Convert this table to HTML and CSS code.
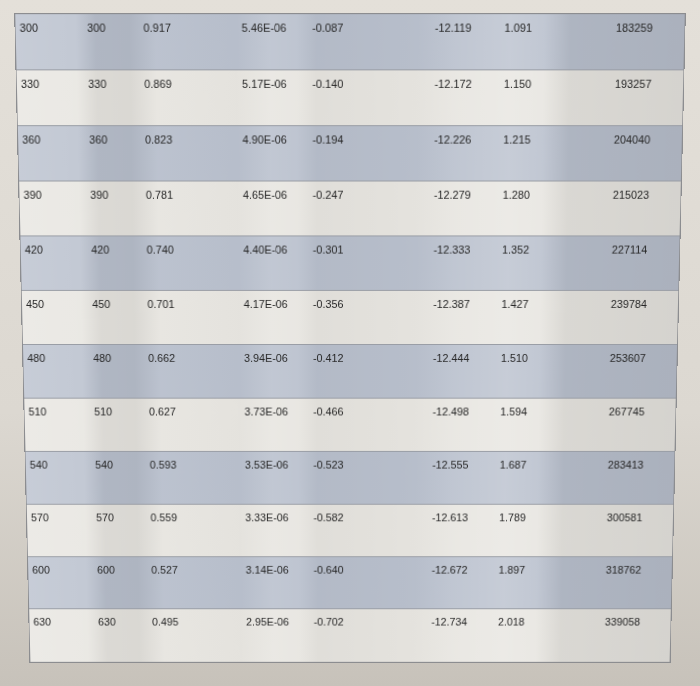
FILE: index.html
```html
<!DOCTYPE html>
<html>
<head>
<meta charset="utf-8">
<link rel="stylesheet" href="styles.css">
</head>
<body>
<div class="photo">
  <div class="sheet">
    <div class="row dark"><span>300</span><span>300</span><span>0.917</span><span>5.46E-06</span><span>-0.087</span><span>-12.119</span><span>1.091</span><span>183259</span></div>
    <div class="row light"><span>330</span><span>330</span><span>0.869</span><span>5.17E-06</span><span>-0.140</span><span>-12.172</span><span>1.150</span><span>193257</span></div>
    <div class="row dark"><span>360</span><span>360</span><span>0.823</span><span>4.90E-06</span><span>-0.194</span><span>-12.226</span><span>1.215</span><span>204040</span></div>
    <div class="row light"><span>390</span><span>390</span><span>0.781</span><span>4.65E-06</span><span>-0.247</span><span>-12.279</span><span>1.280</span><span>215023</span></div>
    <div class="row dark"><span>420</span><span>420</span><span>0.740</span><span>4.40E-06</span><span>-0.301</span><span>-12.333</span><span>1.352</span><span>227114</span></div>
    <div class="row light"><span>450</span><span>450</span><span>0.701</span><span>4.17E-06</span><span>-0.356</span><span>-12.387</span><span>1.427</span><span>239784</span></div>
    <div class="row dark"><span>480</span><span>480</span><span>0.662</span><span>3.94E-06</span><span>-0.412</span><span>-12.444</span><span>1.510</span><span>253607</span></div>
    <div class="row light"><span>510</span><span>510</span><span>0.627</span><span>3.73E-06</span><span>-0.466</span><span>-12.498</span><span>1.594</span><span>267745</span></div>
    <div class="row dark"><span>540</span><span>540</span><span>0.593</span><span>3.53E-06</span><span>-0.523</span><span>-12.555</span><span>1.687</span><span>283413</span></div>
    <div class="row light"><span>570</span><span>570</span><span>0.559</span><span>3.33E-06</span><span>-0.582</span><span>-12.613</span><span>1.789</span><span>300581</span></div>
    <div class="row dark"><span>600</span><span>600</span><span>0.527</span><span>3.14E-06</span><span>-0.640</span><span>-12.672</span><span>1.897</span><span>318762</span></div>
    <div class="row light"><span>630</span><span>630</span><span>0.495</span><span>2.95E-06</span><span>-0.702</span><span>-12.734</span><span>2.018</span><span>339058</span></div>
  </div>
</div>
</body>
</html>
```
FILE: styles.css
```css
html, body {
  margin: 0;
  padding: 0;
}
body {
  width: 700px;
  height: 686px;
  overflow: hidden;
  background: linear-gradient(to bottom, #e4e0d9 0%, #dcd8d1 60%, #c7c2ba 100%);
  font-family: "Liberation Sans", Arial, sans-serif;
}
.photo {
  padding: 20px 22px 0 22px;
}
.sheet {
  --light: linear-gradient(to right,
    rgba(255,255,255,0.20) 0%,
    rgba(255,255,255,0.14) 9%,
    rgba(0,0,0,0.05) 12%,
    rgba(0,0,0,0.06) 17%,
    rgba(255,255,255,0.04) 21%,
    rgba(0,0,0,0.01) 33%,
    rgba(255,255,255,0.12) 38%,
    rgba(255,255,255,0.08) 42%,
    rgba(0,0,0,0.03) 45%,
    rgba(0,0,0,0.01) 60%,
    rgba(255,255,255,0.10) 66%,
    rgba(255,255,255,0.20) 74%,
    rgba(255,255,255,0.12) 79%,
    rgba(0,0,0,0.06) 83%,
    rgba(0,0,0,0.08) 100%);
  width: 656px;
  border: 1px solid #8c8d90;
  box-sizing: border-box;
  display: flex;
  flex-direction: column;
  transform-origin: 50% 50%;
  transform: perspective(1000px) rotateX(-4.1deg);
}
.row {
  height: 54px;
  box-sizing: border-box;
  border-bottom: 1px solid #9a9ea6;
  display: grid;
  grid-template-columns: 66px 55px 96px 69px 120px 68px 109px 1fr;
  padding: 7px 0 0 4px;
  font-size: 10.8px;
  line-height: 12px;
  color: #262626;
}
.row:last-child {
  border-bottom: none;
  height: 55px;
}
.dark {
  background: var(--light), #b9c0cd;
}
.light {
  background: var(--light), #e7e5e0;
}
```
